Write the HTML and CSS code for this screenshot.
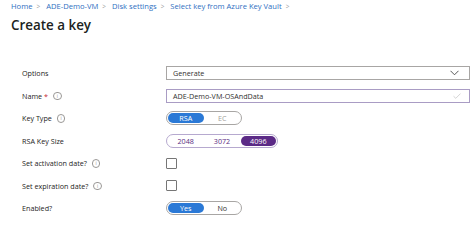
FILE: index.html
```html
<!doctype html>
<html>
<head>
	<meta charset="utf-8">
	<title>Create a key</title>
	<link rel="stylesheet" href="styles.css">
</head>
<body>
	<div class="crumbs">
		<a href="#">Home</a><span class="sep">&gt;</span>
		<a href="#">ADE-Demo-VM</a><span class="sep">&gt;</span>
		<a href="#">Disk settings</a><span class="sep">&gt;</span>
		<a href="#">Select key from Azure Key Vault</a><span class="sep">&gt;</span>
	</div>
	<h1 class="title">Create a key</h1>

	<div class="form">
		<div class="label">Options</div>
		<div class="field">
			<div class="select">
				<span>Generate</span>
				<svg class="chev" width="9" height="6" viewBox="0 0 9 6"><path d="M0.5 0.8 L4.5 4.8 L8.5 0.8" fill="none" stroke="#444" stroke-width="0.9"/></svg>
			</div>
		</div>

		<div class="label">Name <span class="req">*</span> <span class="info">i</span></div>
		<div class="field">
			<div class="input">
				<span>ADE-Demo-VM-OSAndData</span>
				<svg class="check" width="8" height="6" viewBox="0 0 8 6"><path d="M0.5 3.2 L2.8 5.3 L7.5 0.6" fill="none" stroke="#c8c8c8" stroke-width="0.8"/></svg>
			</div>
		</div>

		<div class="label">Key Type <span class="info">i</span></div>
		<div class="field">
			<div class="toggle">
				<span class="opt on">RSA</span>
				<span class="opt off">EC</span>
			</div>
		</div>

		<div class="label">RSA Key Size</div>
		<div class="field">
			<div class="toggle size">
				<span class="opt">2048</span>
				<span class="opt">3072</span>
				<span class="opt on">4096</span>
			</div>
		</div>

		<div class="label">Set activation date? <span class="info">i</span></div>
		<div class="field"><span class="box"></span></div>

		<div class="label">Set expiration date? <span class="info">i</span></div>
		<div class="field"><span class="box"></span></div>

		<div class="label">Enabled?</div>
		<div class="field">
			<div class="toggle">
				<span class="opt on">Yes</span>
				<span class="opt">No</span>
			</div>
		</div>
	</div>
</body>
</html>
```

FILE: styles.css
```css
html, body { margin: 0; padding: 0; background: #fff; }
body {
	font-family: "Open Sans", "Noto Sans", sans-serif;
	color: #323130;
	width: 474px;
	height: 241px;
	overflow: hidden;
}

.crumbs {
	padding: 1px 0 0 11px;
	height: 11px;
	line-height: 11px;
	font-size: 7.6px;
	white-space: nowrap;
}
.crumbs a { color: #2f6fbf; text-decoration: none; }
.crumbs .sep { color: #9a9a9a; margin: 0 4px; font-size: 6.5px; }

.title {
	margin: 4px 0 0 11px;
	font-size: 13.4px;
	line-height: 19px;
	font-weight: 600;
	color: #201f1e;
}

.form {
	margin-top: 27px;
	display: grid;
	grid-template-columns: 144px 304px;
	grid-auto-rows: 22.5px;
	padding-left: 22px;
	font-size: 7.2px;
}
.label, .field { display: flex; align-items: center; }
.label { color: #252423; white-space: nowrap; }
.req { color: #c4262e; margin-left: 2px; }
.info {
	display: inline-flex;
	align-items: center;
	justify-content: center;
	width: 6.5px;
	height: 6.5px;
	margin-left: 5px;
	border: 0.8px solid #9a9896;
	border-radius: 50%;
	font-size: 4.5px;
	color: #8a8886;
	line-height: 1;
}

.select, .input {
	box-sizing: border-box;
	width: 304px;
	height: 14px;
	display: flex;
	align-items: center;
	justify-content: space-between;
	padding: 0 8px 0 6px;
	border: 1px solid #a8a6a4;
	background: #fff;
}
.input { border-color: #a99cc4; }
.chev { margin-right: 2px; }

.toggle {
	box-sizing: border-box;
	width: 76px;
	height: 14px;
	display: flex;
	align-items: center;
	border: 1px solid #a8a6a4;
	border-radius: 7px;
	padding: 1px;
	gap: 1px;
}
.opt {
	flex: 1;
	height: 10px;
	border-radius: 5px;
	display: flex;
	align-items: center;
	justify-content: center;
	color: #323130;
}
.opt.on { background: #2b79d6; color: #fff; }
.opt.off { color: #a19f9d; }

.toggle.size { width: 112px; border-color: #b6a9cf; }
.toggle.size .opt { color: #5a2d82; }
.toggle.size .opt.on { background: #5b2a86; color: #fff; }

.box {
	box-sizing: border-box;
	width: 11px;
	height: 11px;
	border: 1px solid #767676;
	border-radius: 1px;
}
```
